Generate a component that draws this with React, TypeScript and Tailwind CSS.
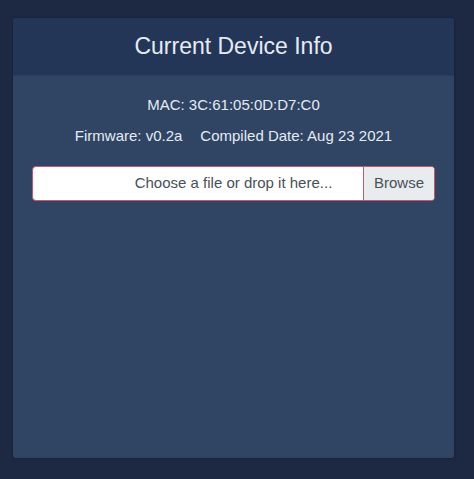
export default function App() {
  return (
    <div className="min-h-screen w-full bg-[#1d2842] pt-[18px] font-['Liberation_Sans',Arial,sans-serif]">
      <div className="ml-[13px] flex h-[440px] w-[441px] flex-col overflow-hidden rounded-[3px] bg-[#304563] shadow-[0_0_2px_rgba(0,0,0,0.4)]">
        {/* Header */}
        <div className="flex h-[58px] items-center justify-center border-b border-[#2a3d5a] bg-[#243657]">
          <h4 className="text-[23px] leading-none text-[#e4ebf5]">Current Device Info</h4>
        </div>

        {/* Body */}
        <div className="flex flex-col items-center px-[19px] pt-[20px] text-[15px] text-[#e4ebf5]">
          <p className="leading-[18px]">MAC: 3C:61:05:0D:D7:C0</p>
          <p className="mt-[13px] flex gap-[18px] leading-[18px]">
            <span>Firmware: v0.2a</span>
            <span>Compiled Date: Aug 23 2021</span>
          </p>

          {/* File input */}
          <label className="relative mt-[21px] flex h-[35px] w-full cursor-pointer overflow-hidden rounded-[4px] border border-[#c9566a] bg-white text-[15px] text-[#495057]">
            <input type="file" className="hidden" />
            <span className="absolute inset-0 flex items-center justify-center">
              Choose a file or drop it here...
            </span>
            <span className="ml-auto flex h-full w-[71px] items-center justify-center border-l border-[#c9566a] bg-[#e9ecef]">
              Browse
            </span>
          </label>
        </div>
      </div>
    </div>
  );
}
